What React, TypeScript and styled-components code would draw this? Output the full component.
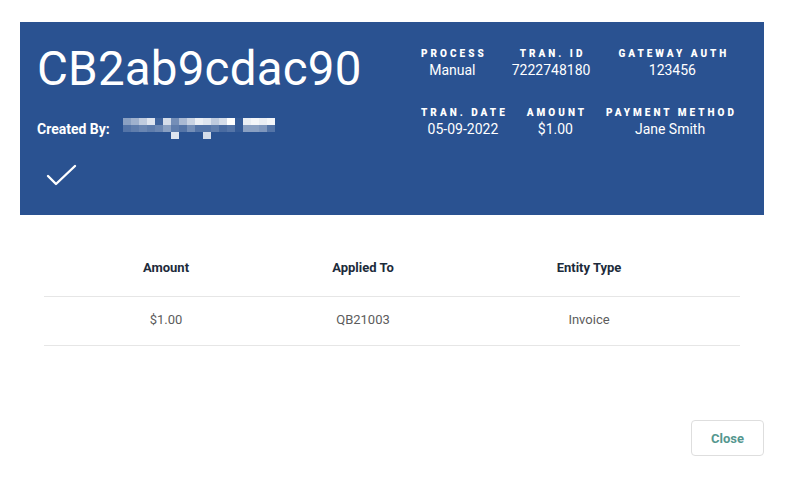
import React from "react";
import styled, { createGlobalStyle } from "styled-components";

const Global = createGlobalStyle`
  html, body { margin: 0; padding: 0; background: #fff; }
  body { font-family: Roboto, "Noto Sans", "Liberation Sans", sans-serif; }
`;

const Page = styled.div`
  width: 786px;
  height: 478px;
  box-sizing: border-box;
  padding: 22px 22px 0 20px;
  display: flex;
  flex-direction: column;
`;

const Header = styled.div`
  height: 193px;
  background: #2a5291;
  color: #fff;
  display: flex;
  justify-content: space-between;
  box-sizing: border-box;
  padding: 0 30px 0 17px;
`;

const Left = styled.div`
  display: flex;
  flex-direction: column;
`;

const Title = styled.div`
  font-size: 47.5px;
  line-height: 54px;
  margin-top: 20px;
  font-weight: 400;
  letter-spacing: 0.2px;
`;

const CreatedRow = styled.div`
  display: flex;
  align-items: center;
  margin-top: 22px;
  gap: 13px;
`;

const CreatedLabel = styled.span`
  font-size: 14px;
  font-weight: 700;
`;

const Mosaic = styled.div`
  display: grid;
  grid-template-columns: repeat(19, 8px);
  grid-auto-rows: 7px;
`;

const Cell = styled.span<{ $a: number }>`
  background: rgba(255, 255, 255, ${(p) => p.$a});
`;

const Check = styled.svg`
  margin-top: 25px;
  margin-left: 9px;
`;

const Meta = styled.div`
  display: flex;
  flex-direction: column;
  gap: 28px;
  padding-top: 26px;
`;

const MetaRow = styled.div<{ $gap: number }>`
  display: flex;
  gap: ${(p) => p.$gap}px;
`;

const MetaItem = styled.div`
  display: flex;
  flex-direction: column;
  align-items: center;
`;

const MetaLabel = styled.div`
  font-size: 10px;
  font-weight: 900;
  letter-spacing: 3px;
  line-height: 12px;
  text-transform: uppercase;
  margin-right: -3px;
`;

const MetaValue = styled.div`
  font-size: 14px;
  line-height: 18px;
  margin-top: 1px;
`;

const Table = styled.div`
  margin: 29px 24px 0 24px;
  display: grid;
  grid-template-columns: 244px 150px 302px;
`;

const HeadCell = styled.div`
  height: 53px;
  display: flex;
  align-items: center;
  justify-content: center;
  padding-bottom: 6px;
  box-sizing: border-box;
  font-size: 13px;
  font-weight: 700;
  color: #1c2b3b;
  border-bottom: 1.5px solid #e6e6e6;
`;

const BodyCell = styled.div`
  height: 49px;
  display: flex;
  align-items: center;
  justify-content: center;
  padding-bottom: 4px;
  box-sizing: border-box;
  font-size: 13px;
  color: #5c5c5c;
  border-bottom: 1.5px solid #e6e6e6;
`;

const Footer = styled.div`
  display: flex;
  justify-content: flex-end;
  margin-top: 74px;
`;

const CloseButton = styled.button`
  width: 73px;
  height: 36px;
  background: #fff;
  border: 1px solid #dedede;
  border-radius: 4px;
  font-family: Roboto, "Noto Sans", sans-serif;
  font-size: 13px;
  font-weight: 700;
  color: #55978f;
  cursor: pointer;
`;

const mosaic = [
  [0.45, 0.55, 0.7, 0.85, 0.1, 0.8, 0.35, 0.6, 0.75, 0.9, 0.85, 0.7, 0.8, 1, 0.05, 0.9, 0.95, 0.9, 0.95],
  [0.2, 0.25, 0.3, 0.25, 0.3, 0.45, 0.25, 0.2, 0.35, 0.2, 0.2, 0.25, 0.15, 0.2, 0.05, 0.45, 0.45, 0.4, 0.2],
  [0, 0, 0, 0, 0, 0, 0.85, 0, 0, 0, 0.8, 0, 0, 0, 0, 0, 0, 0, 0],
];

const meta1 = [
  ["Process", "Manual"],
  ["Tran. ID", "7222748180"],
  ["Gateway Auth", "123456"],
];
const meta2 = [
  ["Tran. Date", "05-09-2022"],
  ["Amount", "$1.00"],
  ["Payment Method", "Jane Smith"],
];

export default function App() {
  return (
    <>
      <Global />
      <Page>
        <Header>
          <Left>
            <Title>CB2ab9cdac90</Title>
            <CreatedRow>
              <CreatedLabel>Created By:</CreatedLabel>
              <Mosaic>
                {mosaic.flatMap((row, r) =>
                  row.map((a, c) => <Cell key={`${r}-${c}`} $a={a} />)
                )}
              </Mosaic>
            </CreatedRow>
            <Check width="32" height="24" viewBox="0 0 32 24">
              <polyline
                points="2,12 10,20 29,2"
                fill="none"
                stroke="#fff"
                strokeWidth="2.4"
                strokeLinecap="round"
                strokeLinejoin="round"
              />
            </Check>
          </Left>
          <Meta>
            <MetaRow $gap={28}>
              {meta1.map(([l, v]) => (
                <MetaItem key={l}>
                  <MetaLabel>{l}</MetaLabel>
                  <MetaValue>{v}</MetaValue>
                </MetaItem>
              ))}
            </MetaRow>
            <MetaRow $gap={22}>
              {meta2.map(([l, v]) => (
                <MetaItem key={l}>
                  <MetaLabel>{l}</MetaLabel>
                  <MetaValue>{v}</MetaValue>
                </MetaItem>
              ))}
            </MetaRow>
          </Meta>
        </Header>
        <Table>
          <HeadCell>Amount</HeadCell>
          <HeadCell>Applied To</HeadCell>
          <HeadCell>Entity Type</HeadCell>
          <BodyCell>$1.00</BodyCell>
          <BodyCell>QB21003</BodyCell>
          <BodyCell>Invoice</BodyCell>
        </Table>
        <Footer>
          <CloseButton>Close</CloseButton>
        </Footer>
      </Page>
    </>
  );
}
